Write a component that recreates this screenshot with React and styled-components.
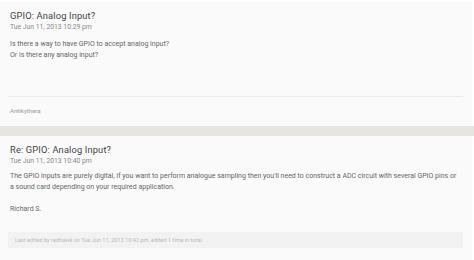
import React from 'react';
import styled, { createGlobalStyle } from 'styled-components';

const Global = createGlobalStyle`
  html, body { margin: 0; padding: 0; background: #ffffff; }
  body { font-family: Roboto, "Noto Sans", sans-serif; }
`;

const Page = styled.div`
  width: 474px;
  height: 260px;
  overflow: hidden;
  display: flex;
  flex-direction: column;
  padding-top: 2px;
  box-sizing: border-box;
  background: #fff;
`;

const Post = styled.div`
  background: #fafafa;
  width: 472px;
  height: ${p => p.h}px;
  flex-shrink: 0;
  box-sizing: border-box;
  padding: 8px 10px 0 10px;
  display: flex;
  flex-direction: column;
`;

const Gap = styled.div`
  height: 10px;
  background: #e7e5e2;
  flex-shrink: 0;
`;

const Title = styled.h3`
  margin: 0;
  font-size: 9.3px;
  font-weight: 400;
  color: #444;
  line-height: 12px;
  letter-spacing: 0.15px;
`;

const Date = styled.div`
  font-size: 6.8px;
  color: #888;
  line-height: 9px;
  margin-top: 1px;
`;

const Body = styled.div`
  font-size: 7px;
  color: #666;
  line-height: 11px;
  padding-right: 4px;
  margin-top: ${p => p.mt || 6}px;
`;

const Signature = styled.div`
  margin-top: auto;
  margin-left: -2px;
  margin-right: -1px;
  border-top: 1px solid #ececec;
  padding: 10px 2px 11px;
  line-height: 8px;
  font-size: 6.1px;
  color: #999;
`;

const EditNote = styled.div`
  margin: 17px -1px 0 -2px;
  height: 16px;
  background: #f2f2f2;
  display: flex;
  align-items: center;
  padding-left: 7px;
  font-size: 5.6px;
  color: #bbb;
`;

export default function App() {
  return (
    <>
      <Global />
      <Page>
        <Post h={124}>
          <Title>GPIO: Analog Input?</Title>
          <Date>Tue Jun 11, 2013 10:29 pm</Date>
          <Body mt={7}>
            Is there a way to have GPIO to accept analog input?<br />
            Or is there any analog input?
          </Body>
          <Signature>Antikythera</Signature>
        </Post>
        <Gap />
        <Post h={130}>
          <Title>Re: GPIO: Analog Input?</Title>
          <Date>Tue Jun 11, 2013 10:40 pm</Date>
          <Body mt={5}>
            The GPIO inputs are purely digital, if you want to perform analogue sampling then you'll need to construct a ADC circuit with several GPIO pins or a sound card depending on your required application.
            <br /><br />
            Richard S.
          </Body>
          <EditNote>Last edited by redhawk on Tue Jun 11, 2013 10:42 pm, edited 1 time in total.</EditNote>
        </Post>
      </Page>
    </>
  );
}
